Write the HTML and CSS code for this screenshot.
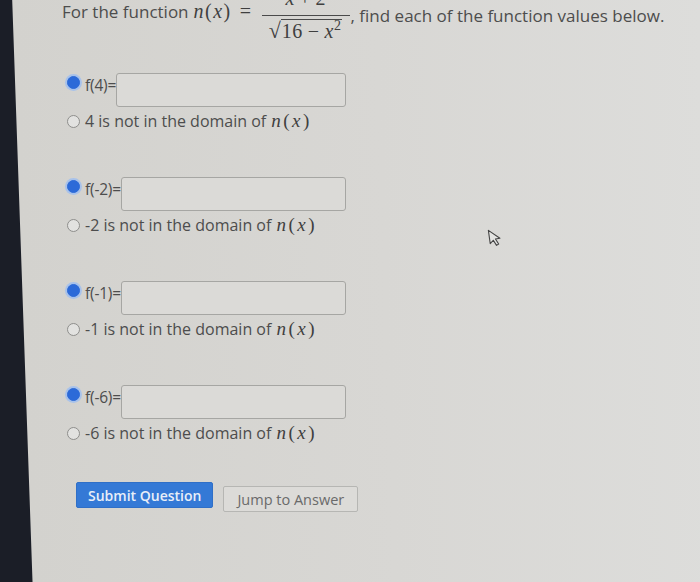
FILE: index.html
```html
<!DOCTYPE html>
<html lang="en">
<head>
    <meta charset="UTF-8">
    <meta name="viewport" content="width=device-width, initial-scale=1.0">
    <title>Function values</title>
    <link rel="stylesheet" href="styles.css">
</head>
<body>
    <div class="screen">
        <p class="prompt">
            <span>For the function</span>
            <span class="math lead"><i>n</i>(<i>x</i>)<span class="eq">=</span></span>
            <span class="frac">
                <span class="num"><i>x</i> + 2</span>
                <span class="den"><span class="surd">√</span><span class="radicand">16<span class="minus">−</span><i>x</i><sup>2</sup></span></span>
            </span>
            <span class="tail">, find each of the function values below.</span>
        </p>

        <div class="part">
            <div class="choice">
                <span class="radio on"></span><span class="fn">f(4)=</span><span class="box"></span>
            </div>
            <div class="choice alt">
                <span class="radio"></span>4 is not in the domain of <span class="math"><i>n</i>(<i>x</i>)</span>
            </div>
        </div>

        <div class="part">
            <div class="choice">
                <span class="radio on"></span><span class="fn">f(-2)=</span><span class="box"></span>
            </div>
            <div class="choice alt">
                <span class="radio"></span>-2 is not in the domain of <span class="math"><i>n</i>(<i>x</i>)</span>
            </div>
        </div>

        <div class="part">
            <div class="choice">
                <span class="radio on"></span><span class="fn">f(-1)=</span><span class="box"></span>
            </div>
            <div class="choice alt">
                <span class="radio"></span>-1 is not in the domain of <span class="math"><i>n</i>(<i>x</i>)</span>
            </div>
        </div>

        <div class="part">
            <div class="choice">
                <span class="radio on"></span><span class="fn">f(-6)=</span><span class="box"></span>
            </div>
            <div class="choice alt">
                <span class="radio"></span>-6 is not in the domain of <span class="math"><i>n</i>(<i>x</i>)</span>
            </div>
        </div>

        <div class="actions">
            <button class="submit">Submit Question</button>
            <button class="jump">Jump to Answer</button>
        </div>
    </div>

    <svg class="cursor" width="14" height="20" viewBox="0 0 14 20">
        <path d="M1.5 1.5 L1.5 15 L5 12 L7.5 17.5 L9.8 16.5 L7.3 11 L11.8 11 Z" fill="#e4e4e2" stroke="#444" stroke-width="1.1" stroke-linejoin="round"/>
    </svg>
</body>
</html>
```

FILE: styles.css
```css
html {
    height: 100%;
    background: linear-gradient(88deg, #1b1e27 32px, #d3d2ce 33px, #d8d7d4 55%, #dddddb);
}
body {
    margin: 0;
    min-height: 100%;
    position: relative;
    overflow: hidden;
    font-family: 'Open Sans', 'Liberation Sans', sans-serif;
    color: #4d4d4d;
}
.screen {
    padding-left: 62px;
}
.prompt {
    display: flex;
    align-items: center;
    margin: -19px 0 0;
    font-size: 17px;
    white-space: nowrap;
}
.math {
    font-family: 'Liberation Serif', 'DejaVu Serif', serif;
    color: #3f3f3f;
    letter-spacing: 1.5px;
}
.math i {
    font-style: italic;
}
.lead {
    font-size: 20px;
    margin-left: 5px;
}
.eq {
    margin: 0 9px 0 8px;
}
.frac {
    display: inline-flex;
    flex-direction: column;
    align-items: center;
    font-family: 'Liberation Serif', 'DejaVu Serif', serif;
    font-size: 20px;
    color: #3f3f3f;
    width: 88px;
}
.num {
    padding: 6px 0 6px;
    line-height: 22px;
    border-bottom: 1px solid #4a4a4a;
    width: 100%;
    text-align: center;
}
.den {
    display: flex;
    align-items: flex-end;
    line-height: 22px;
}
.surd {
    font-size: 22px;
}
.radicand {
    border-top: 1px solid #4a4a4a;
    padding: 0 1px;
    margin-top: 3px;
    letter-spacing: 0.5px;
}
.minus {
    margin: 0 5px;
}
.radicand sup {
    font-size: 14px;
    line-height: 0;
}
.tail {
    margin-left: 1px;
    padding-top: 7px;
}

.part {
    margin-top: 45px;
    padding-left: 5px;
}
.prompt + .part {
    margin-top: 31px;
}
.choice {
    display: flex;
    align-items: flex-start;
    font-size: 16px;
    line-height: 22px;
}
.choice:first-child {
    width: 279px;
}
.fn {
    font-size: 15.5px;
    line-height: 20px;
    margin-top: 2px;
    letter-spacing: -0.2px;
}
.radio {
    width: 11px;
    height: 11px;
    border-radius: 50%;
    border: 1px solid #8e8e8c;
    background: #e2e2e0;
    margin: 4px 5px 0 0;
    flex: none;
}
.radio.on {
    background: #2c6ad8;
    border-color: #2c6ad8;
    box-shadow: 0 0 0 2px #a8c2ea;
    margin-top: 3px;
}
.alt {
    margin-top: 3px;
}
.alt .radio {
    margin-top: 5px;
}
.alt .math {
    font-size: 19px;
    margin-left: 5px;
    letter-spacing: 2.5px;
}
.box {
    flex: 1;
    height: 32px;
    border: 1px solid #a6a6a3;
    border-radius: 3px;
    background: #dbdad7;
}

.actions {
    display: flex;
    align-items: flex-start;
    gap: 10px;
    margin-top: 38px;
    padding-left: 14px;
}
button {
    font-family: 'Open Sans', 'Liberation Sans', sans-serif;
    font-size: 14px;
    border-radius: 2px;
    cursor: pointer;
}
.submit {
    background: #3479d6;
    color: #e8eef8;
    border: 1px solid #2f6fc7;
    font-weight: 600;
    height: 26px;
    padding: 0 11px;
}
.jump {
    background: #dcdbd8;
    color: #6a6a6a;
    border: 1px solid #b6b6b3;
    height: 26px;
    padding: 0 13px;
    margin-top: 4px;
    font-size: 14.5px;
}

.cursor {
    position: absolute;
    left: 488px;
    top: 228px;
    transform: rotate(-8deg);
}
```
